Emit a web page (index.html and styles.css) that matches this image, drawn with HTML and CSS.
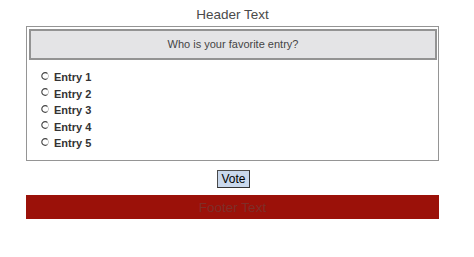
FILE: index.html
```html
<!DOCTYPE html>
<html>
<head>
<meta charset="utf-8">
<link rel="stylesheet" href="styles.css">
</head>
<body>
<div class="poll">
  <div class="poll-header">Header Text</div>
  <div class="poll-box">
    <div class="question">Who is your favorite entry?</div>
    <ul class="entries">
      <li class="entry"><span class="radio"><svg viewBox="0 0 8 8" width="8" height="8"><path d="M6.6 1.6 A3.4 3.4 0 1 0 6.6 6.4" fill="none" stroke="#444" stroke-width="1.1"/><path d="M6.6 1.6 A3.4 3.4 0 0 1 6.6 6.4" fill="none" stroke="#c8c8c8" stroke-width="1"/></svg></span>Entry 1</li>
      <li class="entry"><span class="radio"><svg viewBox="0 0 8 8" width="8" height="8"><path d="M6.6 1.6 A3.4 3.4 0 1 0 6.6 6.4" fill="none" stroke="#444" stroke-width="1.1"/><path d="M6.6 1.6 A3.4 3.4 0 0 1 6.6 6.4" fill="none" stroke="#c8c8c8" stroke-width="1"/></svg></span>Entry 2</li>
      <li class="entry"><span class="radio"><svg viewBox="0 0 8 8" width="8" height="8"><path d="M6.6 1.6 A3.4 3.4 0 1 0 6.6 6.4" fill="none" stroke="#444" stroke-width="1.1"/><path d="M6.6 1.6 A3.4 3.4 0 0 1 6.6 6.4" fill="none" stroke="#c8c8c8" stroke-width="1"/></svg></span>Entry 3</li>
      <li class="entry"><span class="radio"><svg viewBox="0 0 8 8" width="8" height="8"><path d="M6.6 1.6 A3.4 3.4 0 1 0 6.6 6.4" fill="none" stroke="#444" stroke-width="1.1"/><path d="M6.6 1.6 A3.4 3.4 0 0 1 6.6 6.4" fill="none" stroke="#c8c8c8" stroke-width="1"/></svg></span>Entry 4</li>
      <li class="entry"><span class="radio"><svg viewBox="0 0 8 8" width="8" height="8"><path d="M6.6 1.6 A3.4 3.4 0 1 0 6.6 6.4" fill="none" stroke="#444" stroke-width="1.1"/><path d="M6.6 1.6 A3.4 3.4 0 0 1 6.6 6.4" fill="none" stroke="#c8c8c8" stroke-width="1"/></svg></span>Entry 5</li>
    </ul>
  </div>
  <div class="actions"><button class="vote">Vote</button></div>
  <div class="poll-footer">Footer Text</div>
</div>
</body>
</html>
```
FILE: styles.css
```css
html, body {
  margin: 0;
  padding: 0;
  background: #fff;
}
body {
  font-family: "Liberation Sans", Arial, sans-serif;
}
.poll {
  margin-left: 26px;
  width: 413px;
}
.poll-header {
  height: 26px;
  line-height: 30px;
  text-align: center;
  font-size: 13.5px;
  color: #4a4a4a;
}
.poll-box {
  border: 1px solid #959595;
  padding: 2px 1px 0 2px;
  height: 131px;
}
.question {
  height: 27px;
  line-height: 27px;
  border: 2px solid #939393;
  background: #e4e4e6;
  text-align: center;
  font-size: 11px;
  color: #454545;
}
.entries {
  list-style: none;
  margin: 0;
  padding: 9px 0 0 12px;
}
.entry {
  display: flex;
  align-items: center;
  height: 16.5px;
  font-size: 11px;
  font-weight: bold;
  color: #333;
}
.radio {
  display: flex;
  width: 8px;
  height: 8px;
  margin-right: 5px;
  margin-top: -3px;
}
.actions {
  display: flex;
  justify-content: center;
  padding-top: 9px;
  height: 25px;
}
.vote {
  width: 33px;
  height: 18px;
  padding: 0;
  margin: 0 0 0 2px;
  font-family: "Liberation Sans", Arial, sans-serif;
  font-size: 12px;
  color: #000;
  background: #c9d8ec;
  border: 1px solid #4a4a4a;
  border-right-color: #333;
  border-bottom-color: #333;
  border-radius: 0;
}
.poll-footer {
  height: 24px;
  line-height: 25px;
  background: #9b1109;
  text-align: center;
  font-size: 13.5px;
  color: #7f2e28;
}
```
